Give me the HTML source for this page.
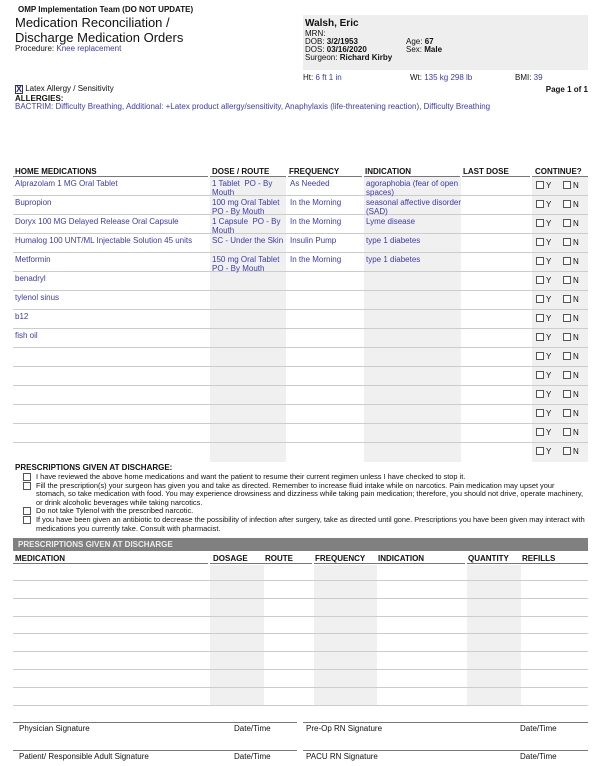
<!DOCTYPE html>
<html><head><meta charset="utf-8"><style>
*{margin:0;padding:0;box-sizing:border-box}
body{width:600px;height:766px;background:#fff;font-family:"Liberation Sans",Arial,sans-serif;font-size:8px;color:#111;position:relative;overflow:hidden}
.a{position:absolute;white-space:nowrap;line-height:9px}
.b{color:#3b3bb0}
.bold{font-weight:bold}
.g{position:absolute;background:#f0f0f0}
.ln{position:absolute;height:1px;background:#ccc}
.cb{display:inline-block;width:8px;height:8px;border:1px solid #555;vertical-align:-1px;margin-right:2px;background:#fff}
</style></head><body>
<div class="a bold" style="left:18px;top:5px;font-size:8px">OMP Implementation Team (DO NOT UPDATE)</div>
<div class="a" style="left:15px;top:15px;font-size:13px;line-height:15px">Medication Reconciliation /<br>Discharge Medication Orders</div>
<div class="a" style="left:15px;top:44px">Procedure: <span class="b">Knee replacement</span></div>
<div style="position:absolute;left:303px;top:15px;width:285px;height:55px;background:#eee"></div>
<div class="a bold" style="left:305px;top:18px;font-size:10px;line-height:11px">Walsh, Eric</div>
<div class="a" style="left:305px;top:30px;line-height:8px">MRN:<br>DOB: <b>3/2/1953</b><br>DOS: <b>03/16/2020</b></div>
<div class="a" style="left:305px;top:53px">Surgeon: <b>Richard Kirby</b></div>
<div class="a" style="left:406px;top:38px;line-height:8px">Age: <b>67</b><br>Sex: <b>Male</b></div>
<div class="a" style="left:303px;top:73px">Ht: <span class="b">6 ft 1 in</span></div>
<div class="a" style="left:410px;top:73px">Wt: <span class="b">135 kg 298 lb</span></div>
<div class="a" style="left:515px;top:73px">BMI: <span class="b">39</span></div>
<div class="a" style="left:15px;top:84px"><span style="display:inline-block;width:8px;height:9px;border:1px solid #333;color:#2a2aa0;font-weight:bold;font-size:9px;line-height:7px;text-align:center;vertical-align:-1px">X</span> Latex Allergy / Sensitivity</div>
<div class="a bold" style="right:12px;top:85px">Page 1 of 1</div>
<div class="a bold" style="left:15px;top:94px">ALLERGIES:</div>
<div class="a b" style="left:15px;top:102px">BACTRIM: Difficulty Breathing, Additional: +Latex product allergy/sensitivity, Anaphylaxis (life-threatening reaction), Difficulty Breathing</div>

<!-- home meds -->
<div class="g" style="left:210px;top:177px;width:76px;height:285px"></div>
<div class="g" style="left:364px;top:177px;width:97px;height:285px"></div>
<div class="g" style="left:532px;top:177px;width:56px;height:285px"></div>
<div class="a bold" style="left:15px;top:167px">HOME MEDICATIONS</div>
<div class="a bold" style="left:212px;top:167px">DOSE / ROUTE</div>
<div class="a bold" style="left:289px;top:167px">FREQUENCY</div>
<div class="a bold" style="left:365px;top:167px">INDICATION</div>
<div class="a bold" style="left:463px;top:167px">LAST DOSE</div>
<div class="a bold" style="left:535px;top:167px">CONTINUE?</div>
<div class="ln" style="left:13px;top:176px;width:195px;background:#777"></div>
<div class="ln" style="left:210px;top:176px;width:76px;background:#777"></div>
<div class="ln" style="left:288px;top:176px;width:74px;background:#777"></div>
<div class="ln" style="left:364px;top:176px;width:96px;background:#777"></div>
<div class="ln" style="left:462px;top:176px;width:68px;background:#777"></div>
<div class="ln" style="left:532px;top:176px;width:56px;background:#777"></div>

<div id="rows"></div>
<div class="a b" style="left:15px;top:179px">Alprazolam 1 MG Oral Tablet</div>
<div class="a b" style="left:212px;top:179px">1 Tablet&nbsp; PO - By<br>Mouth</div>
<div class="a b" style="left:290px;top:179px">As Needed</div>
<div class="a b" style="left:366px;top:179px">agoraphobia (fear of open<br>spaces)</div>
<div class="a b" style="left:15px;top:198px">Bupropion</div>
<div class="a b" style="left:212px;top:198px">100 mg Oral Tablet<br>PO - By Mouth</div>
<div class="a b" style="left:290px;top:198px">In the Morning</div>
<div class="a b" style="left:366px;top:198px">seasonal affective disorder<br>(SAD)</div>
<div class="a b" style="left:15px;top:217px">Doryx 100 MG Delayed Release Oral Capsule</div>
<div class="a b" style="left:212px;top:217px">1 Capsule&nbsp; PO - By<br>Mouth</div>
<div class="a b" style="left:290px;top:217px">In the Morning</div>
<div class="a b" style="left:366px;top:217px">Lyme disease</div>
<div class="a b" style="left:15px;top:236px">Humalog 100 UNT/ML Injectable Solution 45 units</div>
<div class="a b" style="left:212px;top:236px">SC - Under the Skin</div>
<div class="a b" style="left:290px;top:236px">Insulin Pump</div>
<div class="a b" style="left:366px;top:236px">type 1 diabetes</div>
<div class="a b" style="left:15px;top:255px">Metformin</div>
<div class="a b" style="left:212px;top:255px">150 mg Oral Tablet<br>PO - By Mouth</div>
<div class="a b" style="left:290px;top:255px">In the Morning</div>
<div class="a b" style="left:366px;top:255px">type 1 diabetes</div>
<div class="a b" style="left:15px;top:274px">benadryl</div>
<div class="a b" style="left:15px;top:293px">tylenol sinus</div>
<div class="a b" style="left:15px;top:312px">b12</div>
<div class="a b" style="left:15px;top:331px">fish oil</div>

<!-- prescriptions -->
<div class="a bold" style="left:15px;top:463px">PRESCRIPTIONS GIVEN AT DISCHARGE:</div>
<div class="a" style="left:23px;top:473px;font-size:7.4px;line-height:8.6px;white-space:normal;width:562px">
<div style="position:relative;padding-left:13px"><span class="cb" style="position:absolute;left:0;top:0"></span>I have reviewed the above home medications and want the patient to resume their current regimen unless I have checked to stop it.</div>
<div style="position:relative;padding-left:13px"><span class="cb" style="position:absolute;left:0;top:0"></span>Fill the prescription(s) your surgeon has given you and take as directed. Remember to increase fluid intake while on narcotics. Pain medication may upset your stomach, so take medication with food. You may experience drowsiness and dizziness while taking pain medication; therefore, you should not drive, operate machinery, or drink alcoholic beverages while taking narcotics.</div>
<div style="position:relative;padding-left:13px"><span class="cb" style="position:absolute;left:0;top:0"></span>Do not take Tylenol with the prescribed narcotic.</div>
<div style="position:relative;padding-left:13px"><span class="cb" style="position:absolute;left:0;top:0"></span>If you have been given an antibiotic to decrease the possibility of infection after surgery, take as directed until gone. Prescriptions you have been given may interact with medications you currently take. Consult with pharmacist.</div>
</div>
<div style="position:absolute;left:13px;top:538px;width:575px;height:13px;background:#808080"></div>
<div class="a bold" style="left:18px;top:540px;color:#eee">PRESCRIPTIONS GIVEN AT DISCHARGE</div>
<div class="g" style="left:210px;top:565px;width:54px;height:140px"></div>
<div class="g" style="left:314px;top:565px;width:63px;height:140px"></div>
<div class="g" style="left:467px;top:565px;width:54px;height:140px"></div>
<div class="a bold" style="left:15px;top:554px">MEDICATION</div>
<div class="a bold" style="left:213px;top:554px">DOSAGE</div>
<div class="a bold" style="left:265px;top:554px">ROUTE</div>
<div class="a bold" style="left:315px;top:554px">FREQUENCY</div>
<div class="a bold" style="left:378px;top:554px">INDICATION</div>
<div class="a bold" style="left:468px;top:554px">QUANTITY</div>
<div class="a bold" style="left:522px;top:554px">REFILLS</div>
<div class="ln" style="left:13px;top:563px;width:195px;background:#777"></div>
<div class="ln" style="left:210px;top:563px;width:54px;background:#777"></div>
<div class="ln" style="left:264px;top:563px;width:48px;background:#777"></div>
<div class="ln" style="left:314px;top:563px;width:63px;background:#777"></div>
<div class="ln" style="left:377px;top:563px;width:88px;background:#777"></div>
<div class="ln" style="left:467px;top:563px;width:54px;background:#777"></div>
<div class="ln" style="left:521px;top:563px;width:67px;background:#777"></div>
<div id="rx"></div>

<div class="ln" style="left:13px;top:722px;width:284px;background:#777"></div>
<div class="ln" style="left:303px;top:722px;width:285px;background:#777"></div>
<div class="ln" style="left:13px;top:750px;width:284px;background:#777"></div>
<div class="ln" style="left:303px;top:750px;width:285px;background:#777"></div>
<div class="a" style="left:19px;top:724px">Physician Signature</div>
<div class="a" style="left:234px;top:724px">Date/Time</div>
<div class="a" style="left:306px;top:724px">Pre-Op RN Signature</div>
<div class="a" style="left:520px;top:724px">Date/Time</div>
<div class="a" style="left:19px;top:752px">Patient/ Responsible Adult Signature</div>
<div class="a" style="left:234px;top:752px">Date/Time</div>
<div class="a" style="left:306px;top:752px">PACU RN Signature</div>
<div class="a" style="left:520px;top:752px">Date/Time</div>
<script>
var h='';
for(var i=0;i<15;i++){var t=176+19*(i+1);
 if(i<14)h+='<div class="ln" style="left:13px;top:'+t+'px;width:575px"></div>';
 h+='<div class="a" style="left:536px;top:'+(t-14)+'px"><span class="cb"></span>Y</div><div class="a" style="left:563px;top:'+(t-14)+'px"><span class="cb"></span>N</div>';}
document.getElementById('rows').outerHTML=h;
var r='';
for(var j=0;j<8;j++){r+='<div class="ln" style="left:13px;top:'+(580+17.8*j)+'px;width:575px"></div>';}
document.getElementById('rx').outerHTML=r;
</script>
</body></html>
